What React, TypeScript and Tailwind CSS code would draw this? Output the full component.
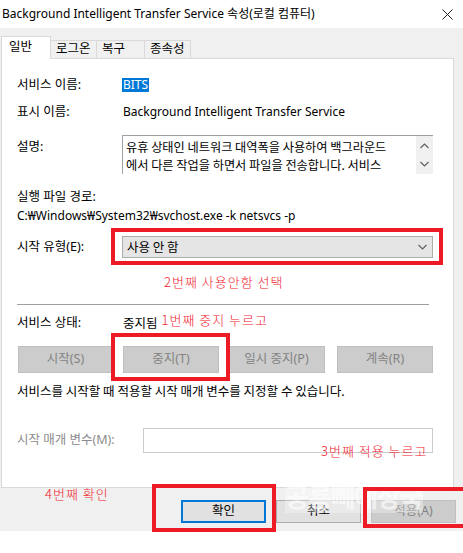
import React from "react";

const ui = { fontFamily: '"Noto Sans", "Noto Sans CJK KR", sans-serif' };
const note = { fontFamily: '"Noto Sans CJK KR", sans-serif' };

function Chevron({ up = false }: { up?: boolean }) {
  return (
    <svg width="9" height="6" viewBox="0 0 9 6" className="block">
      <path
        d={up ? "M0.5 5 L4.5 1 L8.5 5" : "M0.5 1 L4.5 5 L8.5 1"}
        fill="none"
        stroke="#606060"
        strokeWidth="1.2"
      />
    </svg>
  );
}

const tabs = ["로그온", "복구", "종속성"];
const tabWidths = ["w-[46px]", "w-[48px]", "w-[46px]"];

const actions = [
  { label: "시작(S)", w: "w-[95px]", ml: "ml-0" },
  { label: "중지(T)", w: "w-[96px]", ml: "ml-[10px]" },
  { label: "일시 중지(P)", w: "w-[97px]", ml: "ml-[9px]" },
  { label: "계속(R)", w: "w-[96px]", ml: "ml-[12px]" },
];

export default function App() {
  return (
    <div
      className="relative w-[463px] h-[553px] overflow-hidden bg-white text-[12px] text-black"
      style={ui}
    >
      {/* Title bar */}
      <div className="flex h-[28px] items-center justify-between pl-[2px] pr-[10px]">
        <span className="leading-none">
          Background Intelligent Transfer Service 속성(로컬 컴퓨터)
        </span>
        <svg width="11" height="11" viewBox="0 0 11 11">
          <path d="M0.5 0.5 L10.5 10.5 M10.5 0.5 L0.5 10.5" stroke="#222" strokeWidth="1" />
        </svg>
      </div>

      {/* Dialog body */}
      <div className="flex h-[503px] flex-col bg-[#f0f0f0]">
        {/* Tabs */}
        <div className="mt-[8px] flex h-[22px] items-end pl-[1px]">
          <div className="relative z-10 -mb-px flex h-[23px] w-[50px] items-start border border-b-0 border-[#d9d9d9] bg-white pl-[7px] pt-[3px] text-[12.5px] leading-[14px]">
            일반
          </div>
          {tabs.map((t, i) => (
            <div
              key={t}
              className={`flex h-[18px] ${tabWidths[i]} items-center border border-b-0 border-l-0 border-[#d9d9d9] bg-[#f0f0f0] pl-[5px] text-[12.5px] leading-none`}
            >
              {t}
            </div>
          ))}
        </div>

        {/* Panel */}
        <div className="ml-[1px] flex h-[430px] w-[453px] flex-col border border-[#d9d9d9] bg-white pl-[15px]">
          <div className="mt-[19px] flex h-[14px] items-center">
            <span className="w-[105px] text-[12.5px]">서비스 이름:</span>
            <span className="bg-[#0078d7] px-px leading-[14px] text-white">BITS</span>
          </div>

          <div className="mt-[13px] flex h-[14px] items-center">
            <span className="w-[106px] text-[12.5px]">표시 이름:</span>
            <span>Background Intelligent Transfer Service</span>
          </div>

          <div className="mt-[16px] flex h-[39px]">
            <span className="w-[105px] pt-[5px] text-[12.5px] leading-[14px]">설명:</span>
            <div className="flex w-[311px] border-l border-t border-[#a0a0a0]">
              <p className="flex-1 pl-[3px] pt-[2px] text-[12.2px] leading-[18px]" style={note}>
                유휴 상태인 네트워크 대역폭을 사용하여 백그라운드
                <br />
                에서 다른 작업을 하면서 파일을 전송합니다. 서비스
              </p>
              <div className="flex w-[17px] flex-col items-center justify-between bg-[#f0f0f0] py-[7px]">
                <Chevron up />
                <Chevron />
              </div>
            </div>
          </div>

          <div className="mt-[16px] h-[14px] text-[12.5px] leading-[14px]">실행 파일 경로:</div>
          <div className="mt-[5px] h-[14px] leading-[14px]">
            C:₩Windows₩System32₩svchost.exe -k netsvcs -p
          </div>

          <div className="mt-[13px] flex h-[22px] items-center">
            <span className="w-[105px] text-[12.5px]">시작 유형(E):</span>
            <div className="flex h-[22px] w-[311px] items-center justify-between border border-[#adadad] bg-[#e5e5e5] pl-[4px] pr-[5px]">
              <span className="text-[12.5px]" style={note}>사용 안 함</span>
              <Chevron />
            </div>
          </div>

          <div
            className="mt-[17px] h-[14px] pl-[147px] text-[13px] font-light leading-[14px] tracking-[1px] text-[#f0202e]"
            style={note}
          >
            2번째 사용안함 선택
          </div>

          <div className="mt-[15px] h-px w-[412px] bg-[#a0a0a0]" />

          <div className="mt-[11px] flex h-[14px] items-center">
            <span className="w-[106px] text-[12.5px]">서비스 상태:</span>
            <span className="text-[12.5px]" style={note}>중지됨</span>
            <span
              className="-mt-[6px] ml-[4px] text-[13px] font-light tracking-[1px] text-[#f0202e]"
              style={note}
            >
              1번째 중지 누르고
            </span>
          </div>

          <div className="mt-[16px] flex h-[27px] pl-px">
            {actions.map((a) => (
              <div
                key={a.label}
                className={`flex h-[27px] ${a.w} ${a.ml} items-center justify-center border border-[#bfbfbf] bg-[#cccccc] text-[12.5px] text-[#838383]`}
              >
                {a.label}
              </div>
            ))}
          </div>

          <div className="mt-[11px] h-[14px] text-[12.5px] leading-[14px]" style={note}>
            서비스를 시작할 때 적용할 시작 매개 변수를 지정할 수 있습니다.
          </div>

          <div className="mt-[30px] flex h-[25px] items-center">
            <span className="w-[126px] text-[12.5px] text-[#8c8c8c]">시작 매개 변수(M):</span>
            <div className="h-[25px] w-[290px] border border-[#cccccc]" />
          </div>
        </div>

        {/* Bottom buttons */}
        <div className="mt-[12px] flex h-[23px] pl-[181px] text-[12.5px]">
          <div className="flex h-[23px] w-[85px] items-center justify-center border-2 border-[#0078d7] bg-[#e1e1e1]">
            확인
          </div>
          <div className="ml-[10px] flex h-[23px] w-[85px] items-center justify-center border border-[#adadad] bg-[#e1e1e1]">
            취소
          </div>
          <div className="ml-[10px] flex h-[23px] w-[85px] items-center justify-center border border-[#bfbfbf] bg-[#cccccc] text-[#838383]">
            적용(A)
          </div>
        </div>
      </div>

      {/* Watermark */}
      <div
        className="absolute left-[285px] top-[478px] flex h-[35px] w-[138px] items-center justify-center bg-white/30 text-[26px] font-bold tracking-[-1px] text-white/60"
        style={note}
      >
        공룡빼에상국
      </div>

      {/* Annotations */}
      <div className="absolute left-[111px] top-[228px] h-[37px] w-[332px] border-[4px] border-[#ed1c24]" />
      <div className="absolute left-[111px] top-[333px] h-[48px] w-[119px] border-[4px] border-[#ed1c24]" />
      <div className="absolute left-[152px] top-[484px] h-[48px] w-[124px] border-[4px] border-[#ed1c24]" />
      <div className="absolute left-[363px] top-[487px] h-[41px] w-[104px] border-[4px] border-[#ed1c24]" />
      <div
        className="absolute left-[321px] top-[444px] text-[13px] font-light leading-[14px] tracking-[1px] text-[#f0202e]"
        style={note}
      >
        3번째 적용 누르고
      </div>
      <div
        className="absolute left-[45px] top-[487px] text-[13px] font-light leading-[14px] tracking-[1px] text-[#f0202e]"
        style={note}
      >
        4번째 확인
      </div>
    </div>
  );
}
